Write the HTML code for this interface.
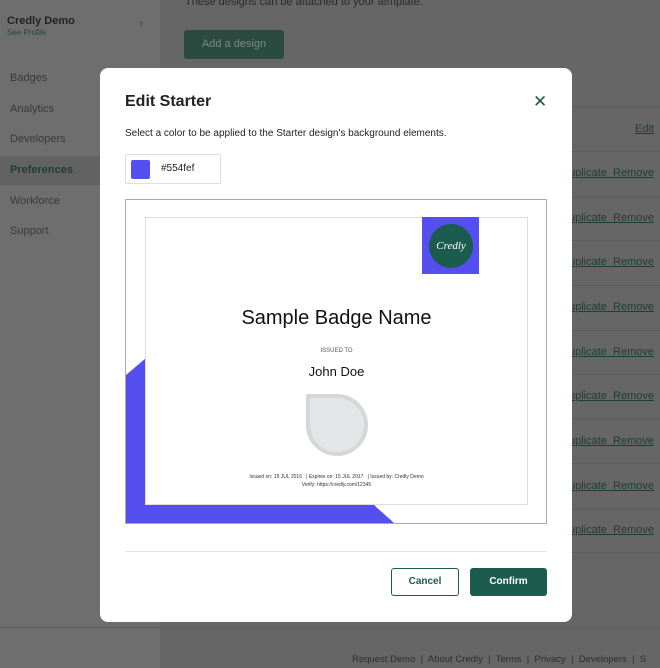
<!DOCTYPE html>
<html><head><style>
body{margin:0;width:660px;height:668px;overflow:hidden;background:#666;font-family:"Liberation Sans",sans-serif;position:relative}
.a{position:absolute}
.side{left:0;top:0;width:160px;height:668px;background:#6e6e6e}
.nav{left:10px;font-size:11px;color:#3a3a3a}
.lnk{font-size:11px;color:#1e3d33;text-decoration:underline;right:6px}
.sep{left:560px;width:100px;height:1px;background:#5c5c5c}
</style></head><body>
<div class="a side"></div>
<div class="a" style="left:0;top:156px;width:160px;height:29px;background:#626262"></div>
<div class="a" style="left:7px;top:15px;font-size:11px;font-weight:bold;color:#222">Credly Demo</div>
<div class="a" style="left:7px;top:28px;font-size:8px;color:#1e4a3c">See Profile</div>
<div class="a" style="left:139px;top:16px;font-size:12px;color:#444">›</div>
<div class="a nav" style="top:72px">Badges</div>
<div class="a nav" style="top:103px">Analytics</div>
<div class="a nav" style="top:133px">Developers</div>
<div class="a nav" style="top:164px;font-weight:bold;color:#1e3d33">Preferences</div>
<div class="a nav" style="top:195px">Workforce</div>
<div class="a nav" style="top:225px">Support</div>
<div class="a" style="left:185px;top:-4px;font-size:11px;color:#2a2a2a">These designs can be attached to your template.</div>
<div class="a" style="left:184px;top:30px;width:100px;height:29px;background:#2b4a40;border-radius:3px;color:#7a8a84;font-size:11px;line-height:29px;text-align:center">Add a design</div>
<div class="a lnk" style="top:123px">Edit</div>
<div class="a sep" style="top:107px"></div><div class="a sep" style="top:151px"></div>
<div class="a sep" style="top:196px"></div><div class="a sep" style="top:240px"></div>
<div class="a sep" style="top:285px"></div><div class="a sep" style="top:330px"></div>
<div class="a sep" style="top:374px"></div><div class="a sep" style="top:419px"></div>
<div class="a sep" style="top:463px"></div><div class="a sep" style="top:508px"></div>
<div class="a sep" style="top:552px"></div>
<div class="a lnk" style="top:167px">uplicate&nbsp; Remove</div>
<div class="a lnk" style="top:212px">uplicate&nbsp; Remove</div>
<div class="a lnk" style="top:256px">uplicate&nbsp; Remove</div>
<div class="a lnk" style="top:301px">uplicate&nbsp; Remove</div>
<div class="a lnk" style="top:346px">uplicate&nbsp; Remove</div>
<div class="a lnk" style="top:390px">uplicate&nbsp; Remove</div>
<div class="a lnk" style="top:435px">uplicate&nbsp; Remove</div>
<div class="a lnk" style="top:480px">uplicate&nbsp; Remove</div>
<div class="a lnk" style="top:524px">uplicate&nbsp; Remove</div>
<div class="a" style="left:0;top:627px;width:660px;height:1px;background:#5e5e5e"></div>
<div class="a" style="left:352px;top:654px;font-size:9.5px;color:#2e2e2e;white-space:nowrap">Request Demo &nbsp;|&nbsp; About Credly &nbsp;|&nbsp; Terms &nbsp;|&nbsp; Privacy &nbsp;|&nbsp; Developers &nbsp;|&nbsp; S</div>

<div class="a" style="left:100px;top:68px;width:472px;height:554px;background:#fff;border-radius:8px">
 <div class="a" style="left:25px;top:25px;font-size:16px;font-weight:bold;color:#222">Edit Starter</div>
 <div class="a" style="left:433px;top:24px;font-size:17px;color:#1b5c4f">✕</div>
 <div class="a" style="left:25px;top:60px;font-size:10px;color:#222">Select a color to be applied to the Starter design's background elements.</div>
 <div class="a" style="left:25px;top:86px;width:94px;height:28px;border:1px solid #ddd;border-radius:2px">
  <div class="a" style="left:5px;top:5px;width:19px;height:19px;background:#554fef;border-radius:2px"></div>
  <div class="a" style="left:35px;top:8px;font-size:10px;color:#222">#554fef</div>
 </div>
 <div class="a" style="left:25px;top:131px;width:420px;height:323px;border:1px solid #aaa;overflow:hidden">
  <svg class="a" style="left:0;top:0" width="420" height="323"><polygon points="0,175 20,158 20,305 248,305 268,323 0,323" fill="#554fef"/></svg>
  <div class="a" style="left:19px;top:17px;width:381px;height:286px;border:1px solid #ddd;background:#fff">
   <div class="a" style="left:276px;top:-1px;width:57px;height:57px;background:#554fef"></div>
   <div class="a" style="left:283px;top:6px;width:44px;height:44px;border-radius:50%;background:#1b5c4f;color:#fff;font-family:'Liberation Serif',serif;font-style:italic;font-size:11px;line-height:44px;text-align:center">Credly</div>
   <div class="a" style="left:0;width:381px;top:89px;text-align:center;font-size:20px;color:#111">Sample Badge Name</div>
   <div class="a" style="left:0;width:381px;top:130px;text-align:center;font-size:6px;color:#555">ISSUED TO</div>
   <div class="a" style="left:0;width:381px;top:146px;text-align:center;font-size:13px;color:#111">John Doe</div>
   <div class="a" style="left:160px;top:176px;width:62px;height:62px;background:#e4e5e7;border-radius:0 50% 50% 50%;box-shadow:inset 0 0 0 4px #d6d7d9"></div>
   <div class="a" style="left:0;width:381px;top:255px;text-align:center;font-size:5px;color:#333;line-height:8px">Issued on: 15 JUL 2016 &nbsp; | Expires on: 15 JUL 2017 &nbsp; | Issued by: Credly Demo<br>Verify: https://credly.com/12345</div>
  </div>
 </div>
 <div class="a" style="left:25px;top:483px;width:422px;height:1px;background:#e5e5e5"></div>
 <div class="a" style="left:291px;top:500px;width:66px;height:26px;border:1px solid #1b5c4f;border-radius:3px;color:#1b5c4f;font-size:10px;font-weight:bold;line-height:26px;text-align:center">Cancel</div>
 <div class="a" style="left:370px;top:500px;width:77px;height:28px;background:#1b5c4f;border-radius:3px;color:#fff;font-size:10px;font-weight:bold;line-height:28px;text-align:center">Confirm</div>
</div>
</body></html>
